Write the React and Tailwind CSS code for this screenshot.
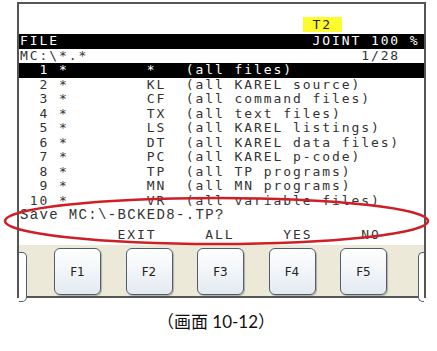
const rows = [
  ["1", "*", "(all files)"],
  ["2", "KL", "(all KAREL source)"],
  ["3", "CF", "(all command files)"],
  ["4", "TX", "(all text files)"],
  ["5", "LS", "(all KAREL listings)"],
  ["6", "DT", "(all KAREL data files)"],
  ["7", "PC", "(all KAREL p-code)"],
  ["8", "TP", "(all TP programs)"],
  ["9", "MN", "(all MN programs)"],
  ["10", "VR", "(all variable files)"],
];

const pad = (n) => " ".repeat(n);

function Line({ children, dark, className = "" }) {
  return (
    <div
      className={`h-[14.5px] pl-[1px] leading-[14.5px] ${dark ? "bg-black text-white" : "text-[#333]"} ${className}`}
    >
      {children}
    </div>
  );
}

function FKey({ label }) {
  return (
    <div className="flex h-[47px] w-[47px] items-center justify-center rounded-[6px] border-[1.5px] border-[#4f5d70] bg-linear-to-b from-white to-[#e4eaf1] font-['DejaVu_Sans',sans-serif] text-[12px] tracking-normal text-[#222] shadow-[1px_1px_1px_rgba(0,0,0,0.25)]">
      {label}
    </div>
  );
}

export default function App() {
  return (
    <div className="relative h-[351px] w-[437px] overflow-hidden bg-white">
      <div className="ml-[17px] mt-[2px] w-[409px] border-2 border-[#555]">
        <div className="whitespace-pre font-['DejaVu_Sans_Mono',monospace] text-[13px] tracking-[1.92px]">
          <div className="h-[30px] pl-[1px] pt-[15px]">
            <div className="h-[11px] leading-[11px] text-[#222]">
              {pad(29)}
              <span className="bg-[#fbfb2e]"> T2 </span>
            </div>
          </div>
          <Line dark>{"FILE" + pad(26) + "JOINT 100 %"}</Line>
          <Line>{"MC:\\*.*" + pad(28) + "1/28"}</Line>
          {rows.map(([num, type, desc], i) => (
            <Line key={num} dark={i === 0}>
              {`${num.padStart(3)} *${pad(8)}${type.padEnd(4)}${desc}`}
            </Line>
          ))}
          <Line className="font-['Liberation_Mono',monospace] text-[14px] tracking-[1.35px]">
            {"Save MC:\\-BCKED8-.TP?"}
          </Line>
          <Line className="mt-[5px]">
            {pad(10) + "EXIT" + pad(5) + "ALL" + pad(5) + "YES" + pad(5) + "NO"}
          </Line>
          <div className="h-[3px]" />
        </div>

        <div className="flex h-[51px] items-start bg-[#ece9d8] pt-[3px]">
          <div className="mt-[4px] h-[50px] w-[8px] rounded-r-[5px] border-[1.5px] border-l-0 border-[#4f5d70] bg-white" />
          <div className="ml-[27px] flex gap-[24.5px]">
            <FKey label="F1" />
            <FKey label="F2" />
            <FKey label="F3" />
            <FKey label="F4" />
            <FKey label="F5" />
          </div>
          <div className="ml-auto mt-[4px] h-[50px] w-[6px] rounded-l-[5px] border-[1.5px] border-r-0 border-[#4f5d70] bg-white" />
        </div>
      </div>

      <div className="mt-[12px] pr-[5px] text-center font-['Lato','Noto_Sans_CJK_SC',sans-serif] text-[17px] leading-[24px] text-[#111]">
        （画面 10-12）
      </div>

      <svg
        className="pointer-events-none absolute left-0 top-0"
        width="437"
        height="351"
        viewBox="0 0 437 351"
      >
        <ellipse cx="216.5" cy="221" rx="211.5" ry="23" fill="none" stroke="#cf1f26" strokeWidth="2.5" />
      </svg>
    </div>
  );
}
